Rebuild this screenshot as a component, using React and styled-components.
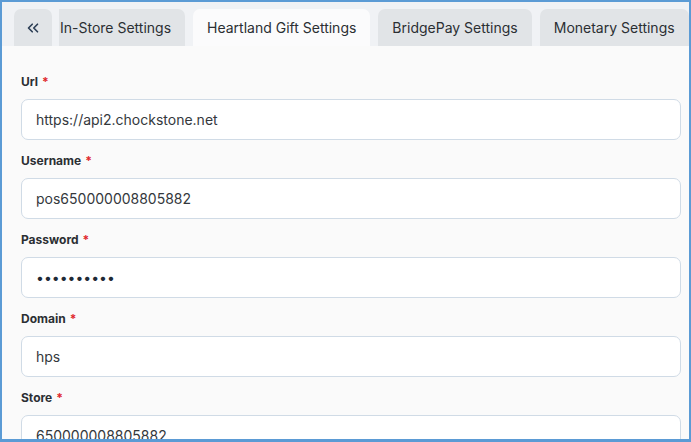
import React from "react";
import styled, { createGlobalStyle } from "styled-components";
import { ChevronsLeft } from "lucide-react";

const GlobalStyle = createGlobalStyle`
  html, body {
    margin: 0;
    padding: 0;
    height: 100%;
    overflow: hidden;
  }
  body {
    font-family: Inter, "Noto Sans", "Liberation Sans", sans-serif;
    color: #2f3337;
  }
  * {
    box-sizing: border-box;
  }
`;

const Frame = styled.div`
  height: 100vh;
  border: 2px solid #5b9bd5;
  border-bottom-width: 3px;
  background: #f0f2f5;
  display: flex;
  flex-direction: column;
  overflow: hidden;
`;

const TabBar = styled.div`
  display: flex;
  align-items: flex-end;
  gap: 8px;
  padding: 7px 0 0 12px;
  height: 44px;
  flex-shrink: 0;
  overflow: hidden;
`;

const CollapseButton = styled.button`
  width: 38px;
  height: 37px;
  flex-shrink: 0;
  border: none;
  border-radius: 7px 7px 0 0;
  background: #e1e4e7;
  color: #2c3e55;
  display: flex;
  align-items: center;
  justify-content: center;
  padding: 0;
  margin-right: -1px;
  cursor: pointer;
`;

const Tab = styled.div`
  height: 37px;
  display: flex;
  align-items: center;
  padding: 0 14px 0 ${(p) => (p.$clipped ? "1px" : "14px")};
  border-radius: ${(p) => (p.$clipped ? "0 7px 0 0" : "7px 7px 0 0")};
  background: ${(p) => (p.$active ? "#fbfbfc" : "#e1e4e7")};
  font-size: 14px;
  color: #2b2f33;
  white-space: nowrap;
  flex-shrink: 0;
`;

const Panel = styled.div`
  flex: 1;
  background: #fafafa;
  padding: 27px 8px 0 19px;
  display: flex;
  flex-direction: column;
  gap: 12px;
`;

const Field = styled.div`
  display: flex;
  flex-direction: column;
  gap: 8px;
`;

const Label = styled.label`
  font-size: 12px;
  line-height: 18px;
  font-weight: 700;
  color: #2b2f33;
`;

const Required = styled.span`
  color: #e0262b;
  margin-left: 4px;
`;

const Input = styled.input`
  height: 41px;
  width: 100%;
  border: 1px solid #d0dbe6;
  border-radius: 7px;
  background: #fff;
  padding: 0 14px;
  font-family: inherit;
  font-size: 14px;
  color: #34383c;
  outline: none;

  &[type="password"] {
    letter-spacing: 0;
    font-size: 14px;
    color: #1f2a36;
  }
`;

const fields = [
  { label: "Url", value: "https://api2.chockstone.net" },
  { label: "Username", value: "pos650000008805882" },
  { label: "Password", value: "abcdefghij", type: "password" },
  { label: "Domain", value: "hps" },
  { label: "Store", value: "650000008805882" },
];

const tabs = [
  { name: "In-Store Settings", clipped: true },
  { name: "Heartland Gift Settings", active: true },
  { name: "BridgePay Settings" },
  { name: "Monetary Settings" },
];

export default function App() {
  return (
    <>
      <GlobalStyle />
      <Frame>
        <TabBar>
          <CollapseButton aria-label="Scroll tabs left">
            <ChevronsLeft size={18} strokeWidth={2.2} />
          </CollapseButton>
          {tabs.map((t) => (
            <Tab key={t.name} $active={t.active} $clipped={t.clipped}>
              {t.name}
            </Tab>
          ))}
        </TabBar>
        <Panel>
          {fields.map((f) => (
            <Field key={f.label}>
              <Label>
                {f.label}
                <Required>*</Required>
              </Label>
              <Input type={f.type || "text"} defaultValue={f.value} readOnly />
            </Field>
          ))}
        </Panel>
      </Frame>
    </>
  );
}
